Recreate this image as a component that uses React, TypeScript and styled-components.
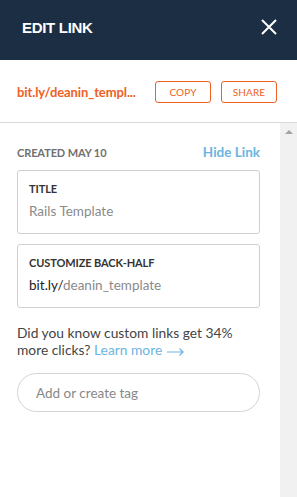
import React from "react";
import styled, { createGlobalStyle } from "styled-components";

const Global = createGlobalStyle`
  html, body { margin: 0; padding: 0; background: #fff; }
  body { font-family: Lato, "Open Sans", Arial, sans-serif; -webkit-font-smoothing: antialiased; }
  #root { height: 497px; }
`;

const Panel = styled.div`
  width: 297px;
  height: 497px;
  display: flex;
  flex-direction: column;
  overflow: hidden;
  background: #fff;
`;

const Header = styled.header`
  height: 60px;
  flex: 0 0 60px;
  background: #1b2e43;
  display: flex;
  align-items: center;
  justify-content: space-between;
  padding: 0 19px 0 22px;
  box-sizing: border-box;
`;

const Title = styled.h1`
  margin: 0;
  color: #fff;
  font-family: "Liberation Sans", Arial, sans-serif;
  font-weight: 700;
  font-size: 15px;
  letter-spacing: -0.3px;
  margin-top: -6px;
`;

const CloseButton = styled.button`
  background: none;
  border: none;
  padding: 0;
  width: 18px;
  height: 18px;
  display: flex;
  margin-top: -7px;
  cursor: pointer;
`;

const LinkBar = styled.div`
  flex: 0 0 61px;
  display: flex;
  align-items: center;
  padding: 0 20px 0 17px;
  border-bottom: 1px solid #d9d9d9;
  gap: 10px;
  margin-top: 1px;
`;

const ShortLink = styled.a`
  flex: 1;
  color: #ee6123;
  font-weight: 700;
  font-size: 13px;
  text-decoration: none;
  white-space: nowrap;
  letter-spacing: -0.1px;
`;

const OutlineButton = styled.button`
  width: 56px;
  height: 22px;
  border: 1px solid #ee6123;
  border-radius: 3px;
  background: #fff;
  color: #ee6123;
  font-family: Lato, Arial, sans-serif;
  font-size: 10px;
  font-weight: 400;
  letter-spacing: 0.1px;
  padding: 0;
`;

const Body = styled.div`
  flex: 1;
  display: flex;
  min-height: 0;
`;

const Content = styled.div`
  flex: 1;
  padding: 21px 20px 0 17px;
  display: flex;
  flex-direction: column;
`;

const Scrollbar = styled.div`
  width: 17px;
  background: #f1f1f1;
  display: flex;
  justify-content: center;
  padding-top: 7px;
  box-sizing: border-box;
`;

const ScrollArrow = styled.div`
  width: 0;
  height: 0;
  border-left: 4px solid transparent;
  border-right: 4px solid transparent;
  border-bottom: 4px solid #a3a3a3;
`;

const MetaRow = styled.div`
  display: flex;
  justify-content: space-between;
  align-items: baseline;
  margin-bottom: 10px;
`;

const Created = styled.span`
  color: #707070;
  font-size: 11px;
  font-weight: 700;
  letter-spacing: -0.1px;
`;

const HideLink = styled.a`
  color: #6cb4e0;
  font-size: 13.5px;
  font-weight: 700;
`;

const Field = styled.div`
  border: 1px solid #cfcfcf;
  border-radius: 3px;
  height: 64px;
  box-sizing: border-box;
  padding: 11px 10px 0 11px;
  margin-bottom: 10px;
`;

const FieldLabel = styled.div`
  color: #333;
  font-size: 11px;
  font-weight: 700;
  letter-spacing: -0.1px;
  margin-bottom: 8px;
`;

const FieldValue = styled.div<{ $muted?: boolean }>`
  color: ${(p) => (p.$muted ? "#8a8a8a" : "#222")};
  font-size: 13.5px;
`;

const Muted = styled.span`
  color: #8a8a8a;
`;

const Tip = styled.p`
  margin: 6px 0 0;
  color: #444;
  font-size: 13.8px;
  line-height: 17px;
`;

const TipPart = styled.span`
  white-space: nowrap;
`;

const LearnMore = styled.a`
  color: #6cb4e0;
  white-space: nowrap;
`;

const Arrow = styled.svg`
  margin-left: 5px;
  vertical-align: middle;
`;

const TagInput = styled.input`
  margin-top: 15px;
  height: 39px;
  border: 1px solid #d4d4d4;
  border-radius: 20px;
  padding: 0 18px;
  font-family: Lato, Arial, sans-serif;
  font-size: 13.5px;
  color: #333;
  box-sizing: border-box;
  outline: none;
  &::placeholder { color: #888; }
`;

export default function App() {
  return (
    <>
      <Global />
      <Panel>
        <Header>
          <Title>EDIT LINK</Title>
          <CloseButton aria-label="Close">
            <svg width="18" height="18" viewBox="0 0 18 18">
              <path d="M2 2 L16 16 M16 2 L2 16" stroke="#fff" strokeWidth="2" />
            </svg>
          </CloseButton>
        </Header>
        <LinkBar>
          <ShortLink>bit.ly/deanin_templ...</ShortLink>
          <OutlineButton>COPY</OutlineButton>
          <OutlineButton>SHARE</OutlineButton>
        </LinkBar>
        <Body>
          <Content>
            <MetaRow>
              <Created>CREATED MAY 10</Created>
              <HideLink>Hide Link</HideLink>
            </MetaRow>
            <Field>
              <FieldLabel>TITLE</FieldLabel>
              <FieldValue $muted>Rails Template</FieldValue>
            </Field>
            <Field>
              <FieldLabel>CUSTOMIZE BACK-HALF</FieldLabel>
              <FieldValue>
                bit.ly/<Muted>deanin_template</Muted>
              </FieldValue>
            </Field>
            <Tip>
              <TipPart>Did you know custom links get 34%</TipPart>{" "}
              <TipPart>more clicks?</TipPart>{" "}
              <LearnMore>
                Learn more
                <Arrow width="17" height="8" viewBox="0 0 17 8">
                  <path d="M0 4 H16 M12.5 0.5 L16 4 L12.5 7.5" stroke="#6cb4e0" strokeWidth="1.2" fill="none" />
                </Arrow>
              </LearnMore>
            </Tip>
            <TagInput placeholder="Add or create tag" />
          </Content>
          <Scrollbar>
            <ScrollArrow />
          </Scrollbar>
        </Body>
      </Panel>
    </>
  );
}
